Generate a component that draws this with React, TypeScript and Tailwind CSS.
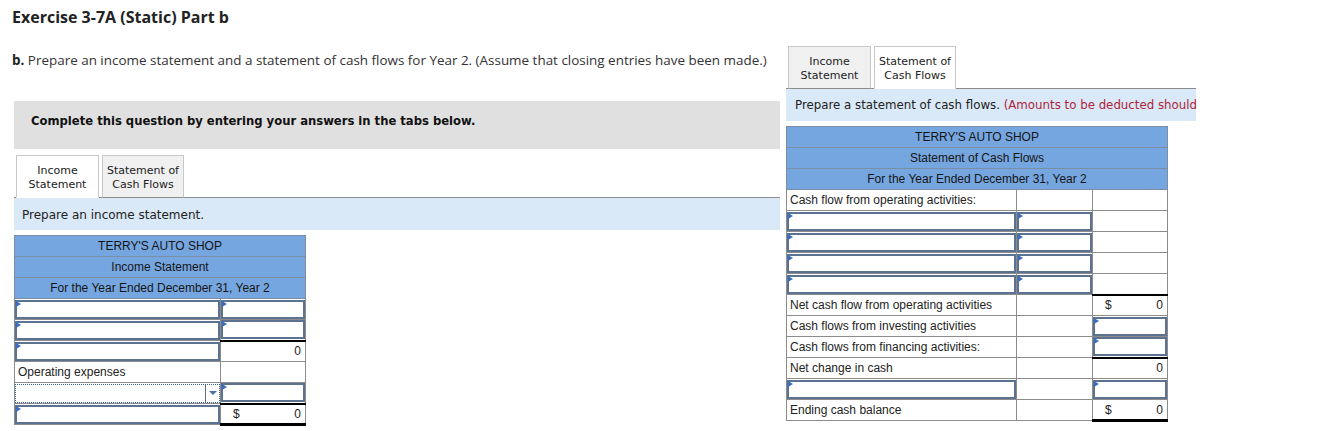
import React from "react";

const tableFont = { fontFamily: '"Liberation Sans", Arial, sans-serif' };

function Tri() {
  return (
    <span className="absolute left-[-1px] top-[-1px] w-0 h-0 border-l-[5px] border-l-[#3b6cc0] border-y-[3px] border-y-transparent" />
  );
}

function Td({
  children,
  className = "",
}: {
  children?: React.ReactNode;
  className?: string;
}) {
  return (
    <td className={"h-[21px] p-0 border border-[#8c8c8c] text-[12px] text-[#222] leading-none " + className}>
      {children}
    </td>
  );
}

function InputTd({ tri = true }: { tri?: boolean }) {
  return (
    <td className="h-[21px] p-0 border border-[#8c8c8c]">
      <div className="relative h-[19px] border-2 border-[#5b7391] bg-white">{tri && <Tri />}</div>
    </td>
  );
}

function HeaderRow({ text, cols }: { text: string; cols: number }) {
  return (
    <tr>
      <td
        colSpan={cols}
        className="h-[21px] p-0 border border-[#7c8ea3] bg-[#75a6e0] text-center text-[12px] text-[#151515] leading-none"
      >
        {text}
      </td>
    </tr>
  );
}

function Tabs({ active }: { active: 0 | 1 }) {
  const base =
    "h-[43px] pt-[2px] flex flex-col items-center justify-center text-[11px] leading-[14px] text-[#222] border border-[#c8c8c8]";
  return (
    <div className="flex gap-[3px] pl-[2px] relative z-10" style={{ fontFamily: '"DejaVu Sans", Verdana, sans-serif' }}>
      <div className={base + " w-[83px] " + (active === 0 ? "bg-white border-b-white" : "bg-[#f0f0f0] border-b-[#8c8c8c]")}>
        <span>Income</span>
        <span>Statement</span>
      </div>
      <div className={base + " w-[82px] " + (active === 1 ? "bg-white border-b-white" : "bg-[#f0f0f0] border-b-[#8c8c8c]")}>
        <span>Statement of</span>
        <span>Cash Flows</span>
      </div>
    </div>
  );
}

function Money() {
  return (
    <div className="flex justify-between pl-[12px] pr-[4px]">
      <span>$</span>
      <span>0</span>
    </div>
  );
}

export default function App() {
  return (
    <div className="w-[1321px] h-[431px] bg-white overflow-hidden">
      <div
        className="h-[46px] pl-[12px] pt-[5px] text-[16px] font-bold text-[#222]"
        style={{ fontFamily: '"Open Sans", "Liberation Sans", sans-serif' }}
      >
        Exercise 3-7A (Static) Part b
      </div>
      <div className="flex">
        {/* Left column */}
        <div className="w-[780px] pl-[14px] shrink-0">
          <div
            className="-ml-[2px] pt-[4px] h-[55px] text-[13.45px] leading-[20px] text-[#333] whitespace-nowrap"
            style={{ fontFamily: '"Open Sans", "Liberation Sans", sans-serif' }}
          >
            <span className="font-bold text-[#222]">b.</span> Prepare an income statement and a statement of cash flows
            for Year 2. (Assume that closing entries have been made.)
          </div>
          <div
            className="h-[48px] bg-[#e0e0e0] pt-[12px] pl-[17px] text-[11.6px] leading-[16px] font-bold text-[#111]"
            style={{ fontFamily: '"DejaVu Sans", Verdana, sans-serif' }}
          >
            Complete this question by entering your answers in the tabs below.
          </div>
          <div className="mt-[6px]">
            <Tabs active={0} />
            <div
              className="-mt-px h-[33px] bg-[#dae9f7] border-t border-[#8c8c8c] flex items-center pl-[8px] pt-[1px] text-[12px] text-[#222]"
              style={{ fontFamily: '"DejaVu Sans", Verdana, sans-serif' }}
            >
              Prepare an income statement.
            </div>
          </div>
          <table className="mt-[5px] table-fixed border-collapse w-[291px]" style={tableFont}>
            <colgroup>
              <col className="w-[206px]" />
              <col className="w-[85px]" />
            </colgroup>
            <tbody>
              <HeaderRow text="TERRY'S AUTO SHOP" cols={2} />
              <HeaderRow text="Income Statement" cols={2} />
              <HeaderRow text="For the Year Ended December 31, Year 2" cols={2} />
              <tr>
                <InputTd />
                <InputTd />
              </tr>
              <tr>
                <InputTd />
                <InputTd />
              </tr>
              <tr>
                <InputTd />
                <Td className="text-right pr-[4px] border-t-2 border-t-black">0</Td>
              </tr>
              <tr>
                <Td className="pl-[3px]">Operating expenses</Td>
                <Td />
              </tr>
              <tr>
                <td className="h-[21px] p-0 border border-[#8c8c8c]">
                  <div className="relative h-[19px] border border-dotted border-[#3b5f8f] bg-white flex justify-end">
                    <div className="w-[14px] h-full border-l border-[#5b7391] flex items-center justify-center">
                      <span className="w-0 h-0 border-t-[4px] border-t-[#4a6fa5] border-x-[4px] border-x-transparent" />
                    </div>
                  </div>
                </td>
                <InputTd />
              </tr>
              <tr>
                <InputTd />
                <Td className="border-t-2 border-t-black border-b-[3px] border-b-black">
                  <Money />
                </Td>
              </tr>
            </tbody>
          </table>
        </div>

        {/* Right column */}
        <div className="ml-[6px] w-[412px] shrink-0">
          <Tabs active={1} />
          <div
            className="-mt-px w-[410px] h-[33px] bg-[#dae9f7] border-t border-[#8c8c8c] flex items-center pl-[9px] pt-[2px] text-[11.8px] text-[#222] whitespace-nowrap"
            style={{ fontFamily: '"DejaVu Sans", Verdana, sans-serif' }}
          >
            Prepare a statement of cash flows.&nbsp;
            <span className="text-[#b0243a]">(Amounts to be deducted should</span>
          </div>
          <table className="mt-[5px] table-fixed border-collapse w-[381px]" style={tableFont}>
            <colgroup>
              <col className="w-[230px]" />
              <col className="w-[76px]" />
              <col className="w-[75px]" />
            </colgroup>
            <tbody>
              <HeaderRow text="TERRY'S AUTO SHOP" cols={3} />
              <HeaderRow text="Statement of Cash Flows" cols={3} />
              <HeaderRow text="For the Year Ended December 31, Year 2" cols={3} />
              <tr>
                <Td className="pl-[3px]">Cash flow from operating activities:</Td>
                <Td />
                <Td />
              </tr>
              {[0, 1, 2, 3].map((i) => (
                <tr key={i}>
                  <InputTd />
                  <InputTd />
                  <Td />
                </tr>
              ))}
              <tr>
                <Td className="pl-[3px]">Net cash flow from operating activities</Td>
                <Td />
                <Td className="border-t-2 border-t-black">
                  <Money />
                </Td>
              </tr>
              <tr>
                <Td className="pl-[3px]">Cash flows from investing activities</Td>
                <Td />
                <InputTd />
              </tr>
              <tr>
                <Td className="pl-[3px]">Cash flows from financing activities:</Td>
                <Td />
                <InputTd />
              </tr>
              <tr>
                <Td className="pl-[3px]">Net change in cash</Td>
                <Td />
                <Td className="text-right pr-[4px] border-t-2 border-t-black">0</Td>
              </tr>
              <tr>
                <InputTd />
                <Td />
                <InputTd />
              </tr>
              <tr>
                <Td className="pl-[3px]">Ending cash balance</Td>
                <Td />
                <Td className="border-b-[3px] border-b-black">
                  <Money />
                </Td>
              </tr>
            </tbody>
          </table>
        </div>
      </div>
    </div>
  );
}
